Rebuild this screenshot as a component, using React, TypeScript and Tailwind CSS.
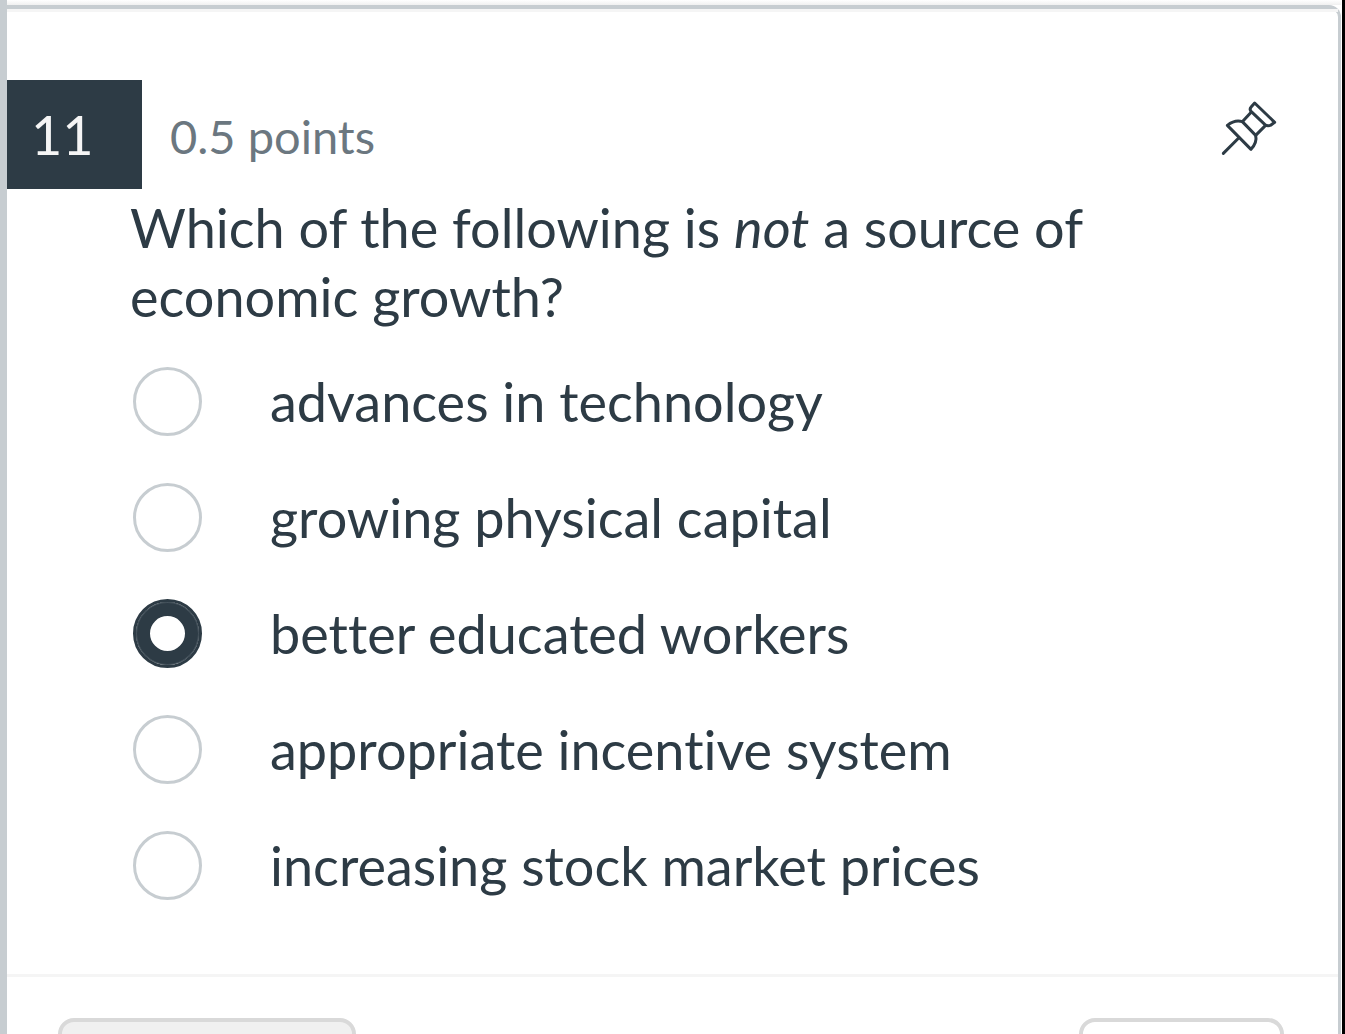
const options = [
  'advances in technology',
  'growing physical capital',
  'better educated workers',
  'appropriate incentive system',
  'increasing stock market prices',
];

function PinIcon() {
  return (
    <svg
      viewBox="48 33 168 168"
      className="size-14"
      fill="none"
      stroke="#2d3b45"
      strokeWidth="9"
      strokeLinejoin="round"
      strokeLinecap="round"
      aria-hidden="true"
    >
      <path d="M149 39 L209 97 L199 104 Q189 111 180 104 L139 65 Q132 58 139 50 Z" />
      <path d="M137 68 L112 95 M181 107 L152 136" />
      <path d="M67 106 Q90 88 112 95 L152 136 Q157 157 138 178 Z" />
      <path d="M101 144 L55 190" />
    </svg>
  );
}

export default function App() {
  return (
    <div className="flex h-screen overflow-hidden bg-white font-['Lato',sans-serif] text-[#2d3b45] [font-variant-ligatures:none]">
      <div className="w-[7px] shrink-0 bg-[#c7cdd1]" />
      <div className="flex min-w-0 grow flex-col">
        <div className="h-[5px] shrink-0 bg-gradient-to-b from-white to-[#f0f0f0]" />
        <main className="grow rounded-tr-xl border-t-4 border-r-[3px] border-[#c7cdd1]">
          <div className="h-[3px] bg-[#f5f5f5]" />
          <header className="mt-[68px] flex items-start">
            <div className="flex h-[109px] w-[135px] items-center bg-[#2d3b45] pl-6 text-[54px] leading-none text-[#f5f5f5]">
              11
            </div>
            <div className="ml-7 flex h-[109px] items-center pt-1 text-[47px] leading-none text-[#6b7780]">
              0.5 points
            </div>
            <button type="button" aria-label="Pin question" className="mt-[21px] mr-[61px] ml-auto">
              <PinIcon />
            </button>
          </header>
          <fieldset className="mt-1 pr-32 pl-[123px] text-[54px] leading-[69px]">
            <legend>
              Which of the following is <em>not</em> a source of economic growth?
            </legend>
            <div className="mt-9 flex flex-col gap-[47px]">
              {options.map((option, index) => (
                <label key={option} className="flex items-center gap-[68px] pl-[3px]">
                  <input
                    type="radio"
                    name="answer"
                    defaultChecked={index === 2}
                    className="size-[69px] shrink-0 appearance-none rounded-full border-[3px] border-[#c7cdd1] checked:border-[#2d3b45] checked:shadow-[inset_0_0_0_1px_#46535d,inset_0_0_0_14px_#2d3b45]"
                  />
                  <span>{option}</span>
                </label>
              ))}
            </div>
          </fieldset>
          <footer className="mt-[74px] flex justify-between border-t-[3px] border-[#f5f5f5] pt-[41px] pr-[54px] pl-[51px]">
            <button
              type="button"
              aria-label="Previous"
              className="h-28 w-[298px] rounded-2xl border-4 border-[#d9d9d9] bg-[#f0f0f0]"
            />
            <button
              type="button"
              aria-label="Next"
              className="h-28 w-[205px] rounded-2xl border-4 border-[#d9d9d9] bg-white"
            />
          </footer>
        </main>
      </div>
      <div className="ml-px w-[3px] shrink-0 bg-black" />
    </div>
  );
}
